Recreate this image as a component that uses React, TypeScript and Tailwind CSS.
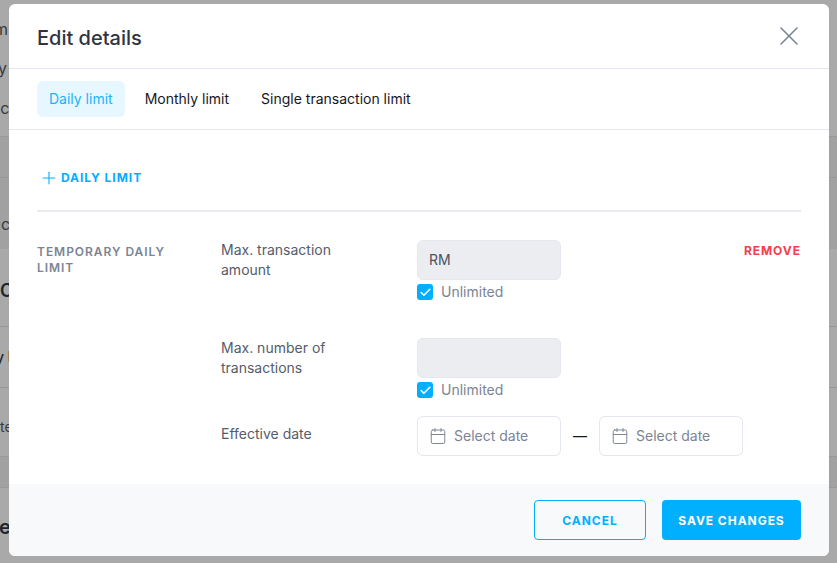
import { Calendar, Check, Plus, X } from "lucide-react";

function Unlimited() {
  return (
    <label className="mt-1 flex h-4 items-center gap-2 text-sm text-[#7b8494]">
      <span className="flex h-4 w-4 items-center justify-center rounded-[3px] bg-[#00b0ff] text-white">
        <Check size={13} strokeWidth={3} />
      </span>
      Unlimited
    </label>
  );
}

function DateInput() {
  return (
    <div className="flex h-10 w-36 items-center gap-[7px] rounded-md border border-[#e4e7ee] bg-white pl-[11px] text-sm text-[#7b8494]">
      <Calendar size={18} strokeWidth={1.3} />
      Select date
    </div>
  );
}

function Backdrop() {
  return (
    <div className="absolute inset-0 bg-[#a9a9a9] text-sm text-[#3a3a3a]">
      <div className="absolute left-0 top-[136px] h-[113px] w-full border-t border-[#9a9a9a] bg-[#a1a1a1]" />
      <div className="absolute left-0 top-[177px] h-px w-full bg-[#979797]" />
      <div className="absolute left-0 top-[326px] h-px w-full bg-[#979797]" />
      <div className="absolute left-0 top-[387px] h-px w-full bg-[#979797]" />
      <div className="absolute left-0 top-[456px] h-[32px] w-full border-y border-[#9a9a9a] bg-[#a1a1a1]" />
      <span className="absolute left-[-6px] top-[17px] text-base">m</span>
      <span className="absolute left-[-2px] top-[56px] text-base">y</span>
      <span className="absolute left-[-9px] top-[96px] text-base">ec</span>
      <span className="absolute left-[-3px] top-[212px] text-base">ic</span>
      <span className="absolute left-0 top-[277px] text-lg font-semibold text-[#20242c]">C</span>
      <span className="absolute left-[-4px] top-[347px] font-medium text-[#20242c]">y l</span>
      <span className="absolute left-0 top-[417px]">te</span>
      <span className="absolute left-[-1px] top-[513px] text-xl font-semibold text-[#20242c]">er</span>
    </div>
  );
}

export default function App() {
  return (
    <div className="relative h-[563px] w-[837px] overflow-hidden font-['Inter',sans-serif]">
      <Backdrop />
      <div className="relative ml-[9px] mt-1 inline-flex h-[552px] w-[820px] flex-col overflow-hidden rounded-md bg-white align-top">
        <div className="flex h-[65px] items-center justify-between border-b border-[#e4e7ee] pl-7 pr-6">
          <h2 className="mt-1 text-xl font-medium text-[#2f3441]">Edit details</h2>
          <X size={32} strokeWidth={1.2} className="text-[#7b8494]" />
        </div>

        <div className="flex h-[61px] items-center gap-2 border-b border-[#e4e7ee] pl-7 text-sm">
          <div className="flex h-9 items-center rounded-md bg-[#e6f7ff] px-3 text-[#1ab4fb]">Daily limit</div>
          <div className="flex h-9 items-center px-3 text-[#14171f]">Monthly limit</div>
          <div className="flex h-9 items-center px-3 text-[#14171f]">Single transaction limit</div>
        </div>

        <div className="flex flex-1 flex-col px-7">
          <div className="flex h-[82px] items-center gap-[2px] border-b-2 border-[#e9ebf0] pl-[2px] pt-[15px]">
            <Plus size={20} strokeWidth={1.3} className="text-[#00b0ff]" />
            <span className="text-xs font-bold tracking-[0.08em] text-[#00b0ff]">DAILY LIMIT</span>
          </div>

          <div className="mt-7 flex">
            <div className="w-[184px] text-xs leading-4 font-semibold tracking-[0.08em] text-[#7b8494]">
              <div className="mt-1 w-[150px]">TEMPORARY DAILY LIMIT</div>
            </div>

            <div className="flex-1 text-sm leading-5 text-[#555c6b]">
              <div className="flex h-[98px]">
                <div className="w-[196px]">
                  Max. transaction
                  <br />
                  amount
                </div>
                <div className="w-36">
                  <div className="flex h-10 items-center rounded-md border border-[#e4e7ee] bg-[#ecedf1] pl-[11px] text-[#4b5160]">RM</div>
                  <Unlimited />
                </div>
                <div className="ml-auto mt-[3px] text-xs leading-4 font-bold tracking-[0.08em] text-[#f2404a]">REMOVE</div>
              </div>

              <div className="flex h-[78px]">
                <div className="w-[196px]">
                  Max. number of
                  <br />
                  transactions
                </div>
                <div className="w-36">
                  <div className="h-10 rounded-md border border-[#e4e7ee] bg-[#ecedf1]" />
                  <Unlimited />
                </div>
              </div>

              <div className="flex">
                <div className="w-[196px] pt-2">Effective date</div>
                <DateInput />
                <div className="flex w-[38px] items-center justify-center text-[#14171f]">—</div>
                <DateInput />
              </div>
            </div>
          </div>
        </div>

        <div className="flex h-[72px] items-start justify-end gap-4 bg-[#f8f9fb] pr-7 pt-4">
          <button className="flex h-10 w-28 items-center justify-center rounded-[4px] border border-[#00b0ff] pt-px text-xs font-bold tracking-[0.08em] text-[#00b0ff]">
            CANCEL
          </button>
          <button className="flex h-10 w-[139px] items-center justify-center rounded-[4px] bg-[#00b0ff] pt-px text-xs font-bold tracking-[0.08em] text-white">
            SAVE CHANGES
          </button>
        </div>
      </div>
    </div>
  );
}
